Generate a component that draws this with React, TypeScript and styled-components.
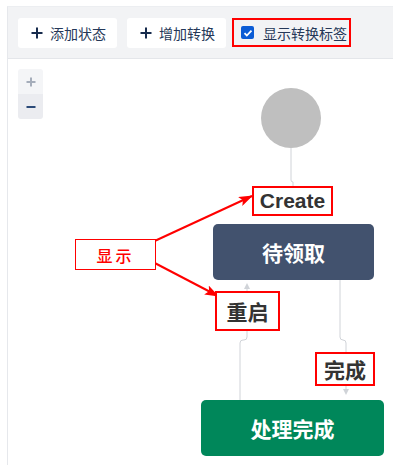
import styled, { createGlobalStyle } from 'styled-components';

const GlobalStyle = createGlobalStyle`
  html, body {
    margin: 0;
    padding: 0;
    background: #ffffff;
  }
  body {
    font-family: 'Liberation Sans', 'Noto Sans CJK SC', sans-serif;
  }
`;

const Page = styled.div`
  width: 393px;
  height: 465px;
  padding: 6px 0 0 7px;
  box-sizing: border-box;
  overflow: hidden;
`;

const Frame = styled.div`
  height: 100%;
  border-left: 1px solid #e6e8ec;
  border-top: 1px solid #eceef1;
  display: flex;
  flex-direction: column;
`;

const Toolbar = styled.div`
  height: 52px;
  background: #f2f3f5;
  border-bottom: 1px solid #e4e6ea;
  display: flex;
  align-items: center;
  gap: 10px;
  padding: 0 10px;
  box-sizing: border-box;
  flex-shrink: 0;
`;

const ToolButton = styled.button`
  display: flex;
  align-items: center;
  gap: 7px;
  height: 30px;
  padding: 0 11px 0 13px;
  border: 0;
  border-radius: 3px;
  background: #ffffff;
  color: #253858;
  font-family: 'Noto Sans CJK SC', sans-serif;
  font-size: 14px;
  cursor: pointer;
`;

const CheckLabel = styled.label`
  display: flex;
  align-items: center;
  gap: 9px;
  height: 25px;
  margin-left: -4px;
  padding: 0 2px 0 7px;
  border: 2px solid #ff0000;
  color: #253858;
  font-family: 'Noto Sans CJK SC', sans-serif;
  font-size: 14px;
`;

const CheckBox = styled.span`
  width: 13px;
  height: 13px;
  border-radius: 2px;
  background: #0b5cd5;
  display: flex;
  align-items: center;
  justify-content: center;
`;

const Canvas = styled.div`
  position: relative;
  flex: 1;
  background: #ffffff;
`;

const ZoomControl = styled.div`
  position: absolute;
  left: 10px;
  top: 10px;
  width: 25px;
  display: flex;
  flex-direction: column;
  border-radius: 3px;
  overflow: hidden;
`;

const ZoomButton = styled.div<{ $active?: boolean }>`
  height: 25px;
  display: flex;
  align-items: center;
  justify-content: center;
  background: ${(p) => (p.$active ? '#ebecf0' : '#f4f5f7')};
`;

const Edges = styled.svg`
  position: absolute;
  left: 0;
  top: 0;
  overflow: visible;
`;

const StartNode = styled.div`
  position: absolute;
  left: 253px;
  top: 29px;
  width: 60px;
  height: 60px;
  border-radius: 50%;
  background: #bfbfbf;
`;

const StateNode = styled.div<{ $color: string; $x: number; $y: number; $w: number }>`
  position: absolute;
  left: ${(p) => p.$x}px;
  top: ${(p) => p.$y}px;
  width: ${(p) => p.$w}px;
  height: 56px;
  border-radius: 5px;
  background: ${(p) => p.$color};
  color: #ffffff;
  display: flex;
  align-items: center;
  justify-content: center;
  font-family: 'Noto Sans CJK SC', sans-serif;
  font-weight: 700;
  font-size: 21px;
`;

const EdgeLabel = styled.div<{ $x: number; $y: number; $w: number; $h: number }>`
  position: absolute;
  left: ${(p) => p.$x}px;
  top: ${(p) => p.$y}px;
  width: ${(p) => p.$w}px;
  height: ${(p) => p.$h}px;
  box-sizing: border-box;
  border: 2px solid #ff0000;
  background: #ffffff;
  color: #333333;
  display: flex;
  align-items: center;
  justify-content: center;
  font-family: 'Liberation Sans', 'Noto Sans CJK SC', sans-serif;
  font-weight: 700;
  font-size: 21px;
`;

const Note = styled.div`
  position: absolute;
  left: 67px;
  top: 180px;
  width: 81px;
  height: 31px;
  box-sizing: border-box;
  border: 1px solid #ff0000;
  background: #ffffff;
  color: #ff0000;
  display: flex;
  align-items: center;
  justify-content: center;
  letter-spacing: 3px;
  font-family: 'Noto Sans CJK SC', sans-serif;
  font-weight: 500;
  font-size: 16px;
`;

function Plus() {
  return (
    <svg width="12" height="12" viewBox="0 0 12 12">
      <path d="M6 0.5v11M0.5 6h11" stroke="#172b4d" strokeWidth="2" />
    </svg>
  );
}

export default function App() {
  return (
    <Page>
      <GlobalStyle />
      <Frame>
        <Toolbar>
          <ToolButton>
            <Plus />
            添加状态
          </ToolButton>
          <ToolButton>
            <Plus />
            增加转换
          </ToolButton>
          <CheckLabel>
            <CheckBox>
              <svg width="10" height="10" viewBox="0 0 10 10">
                <path d="M1.5 5.2l2.3 2.3L8.5 2.6" stroke="#fff" strokeWidth="1.8" fill="none" />
              </svg>
            </CheckBox>
            显示转换标签
          </CheckLabel>
        </Toolbar>
        <Canvas>
          <ZoomControl>
            <ZoomButton>
              <svg width="10" height="10" viewBox="0 0 10 10">
                <path d="M5 0.5v9M0.5 5h9" stroke="#a5adba" strokeWidth="2" />
              </svg>
            </ZoomButton>
            <ZoomButton $active>
              <svg width="10" height="10" viewBox="0 0 10 10">
                <path d="M0.5 5h9" stroke="#2b4a78" strokeWidth="2" />
              </svg>
            </ZoomButton>
          </ZoomControl>

          <Edges width="385" height="405">
            <defs>
              <marker id="red" markerWidth="14" markerHeight="10" refX="13" refY="5" orient="auto" markerUnits="userSpaceOnUse">
                <path d="M0 0L14 5L0 10L3 5z" fill="#ff0000" />
              </marker>
            </defs>
            <g stroke="#d0d3d8" strokeWidth="1" fill="none">
              <path d="M283 89V121q0 2 2 2V128" />
              <path d="M239 229V278q0 3 -3 3h-1q-3 0 -3 3V341" />
              <path d="M332 221V278q0 3 3 3h0q3 0 3 3V331" />
            </g>
            <path d="M239 224l-3 6h6z" fill="#d0d3d8" />
            <path d="M338 336l-3 -6h6z" fill="#d0d3d8" />
            <g stroke="#ff0000" strokeWidth="2" fill="none">
              <path d="M138 186L244 137" markerEnd="url(#red)" />
              <path d="M141 201L210 237" markerEnd="url(#red)" />
            </g>
          </Edges>

          <StartNode />
          <StateNode $color="#42526e" $x={205} $y={165} $w={161}>
            待领取
          </StateNode>
          <StateNode $color="#00875a" $x={193} $y={341} $w={183}>
            处理完成
          </StateNode>

          <EdgeLabel $x={244} $y={127} $w={81} $h={30}>
            Create
          </EdgeLabel>
          <EdgeLabel $x={207} $y={232} $w={65} $h={40}>
            重启
          </EdgeLabel>
          <EdgeLabel $x={307} $y={293} $w={60} $h={34}>
            完成
          </EdgeLabel>
          <Note>显示</Note>
        </Canvas>
      </Frame>
    </Page>
  );
}
